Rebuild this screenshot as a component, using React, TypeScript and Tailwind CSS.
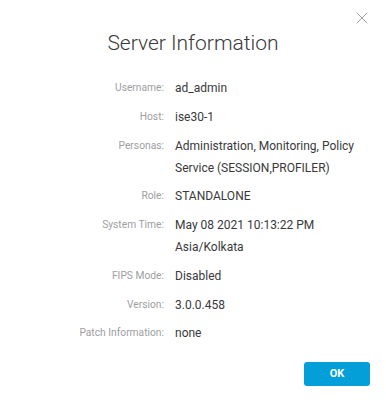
import { X } from 'lucide-react';

const rows: { label: string; value: string[] }[] = [
  { label: 'Username:', value: ['ad_admin'] },
  { label: 'Host:', value: ['ise30-1'] },
  { label: 'Personas:', value: ['Administration, Monitoring, Policy', 'Service (SESSION,PROFILER)'] },
  { label: 'Role:', value: ['STANDALONE'] },
  { label: 'System Time:', value: ['May 08 2021 10:13:22 PM', 'Asia/Kolkata'] },
  { label: 'FIPS Mode:', value: ['Disabled'] },
  { label: 'Version:', value: ['3.0.0.458'] },
  { label: 'Patch Information:', value: ['none'] },
];

export default function App() {
  return (
    <div
      className="relative w-full h-[400px] bg-white text-[#39393b]"
      style={{ fontFamily: 'Roboto, "Liberation Sans", sans-serif' }}
    >
      {/* Close */}
      <button className="absolute top-[8px] right-[14px] w-5 h-5 flex items-center justify-center text-[#8c8c8c]">
        <X size={20} strokeWidth={1} />
      </button>

      {/* Title */}
      <h1 className="pt-[29px] text-center text-[21px] leading-[28px] font-light">Server Information</h1>

      {/* Details */}
      <div className="mt-[20px] grid grid-cols-[164px_1fr] gap-x-[11px] gap-y-[6.75px] leading-[22px]">
        {rows.map((row) => (
          <div key={row.label} className="contents">
            <div className="text-right text-[10.25px] text-[#9e9ea2]">{row.label}</div>
            <div className="text-[12px]">
              {row.value.map((line) => (
                <div key={line}>{line}</div>
              ))}
            </div>
          </div>
        ))}
      </div>

      {/* Footer */}
      <div className="flex justify-end pr-[16px] mt-[18px]">
        <button className="w-[66px] h-[24px] rounded-[3px] bg-[#049fd9] text-white text-[11px] font-bold">OK</button>
      </div>
    </div>
  );
}
